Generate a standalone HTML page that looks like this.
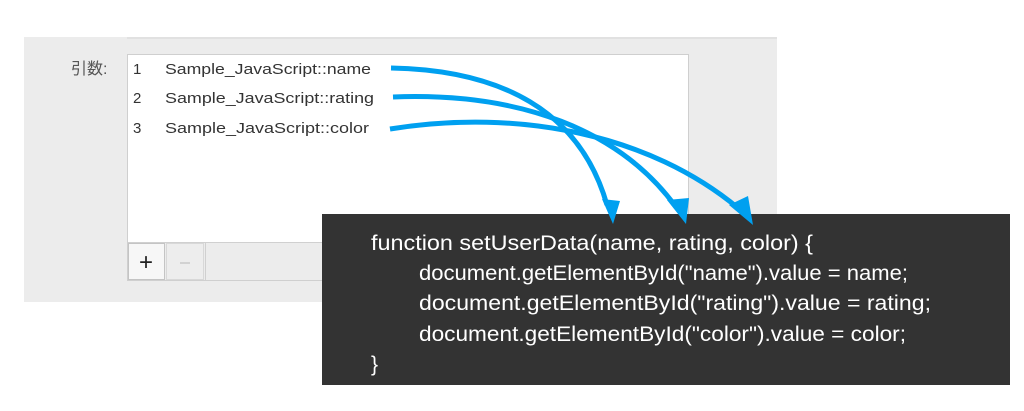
<!DOCTYPE html>
<html><head><meta charset="utf-8"><style>
html,body{margin:0;padding:0;background:#fff;width:1024px;height:411px;overflow:hidden}
</style></head><body>
<svg width="1024" height="411" viewBox="0 0 1024 411" xmlns="http://www.w3.org/2000/svg">
<rect x="0" y="0" width="1024" height="411" fill="#fff"/>
<rect x="24" y="37" width="753" height="265" fill="#ececec"/>
<line x1="127" y1="38" x2="777" y2="38" fill="none" stroke="#d6d6d6" stroke-width="1"/>
<rect x="127.5" y="54.5" width="561" height="226" fill="#fff" stroke="#cfcfcf"/>
<rect x="128" y="242" width="560" height="38" fill="#ececec"/>
<line x1="128" y1="242.5" x2="688" y2="242.5" stroke="#d0d0d0"/>
<rect x="128.5" y="243.5" width="36" height="36" fill="#f7f7f7" stroke="#c4c4c4"/>
<rect x="166.5" y="243.5" width="37" height="36" fill="#ededed" stroke="#d8d8d8"/>
<line x1="205.5" y1="243" x2="205.5" y2="280" stroke="#d0d0d0"/>
<text x="146" y="270" font-family="Liberation Sans, sans-serif" font-size="24" fill="#222" text-anchor="middle">+</text>
<line x1="180" y1="263" x2="190" y2="263" stroke="#c8c8c8" stroke-width="1.5"/>
<g font-family="Liberation Sans, 'Noto Sans CJK JP', sans-serif" font-size="15" fill="#333">
<text x="71" y="74" fill="#555" font-size="16">引数:</text>
<text x="133" y="74">1</text><text x="165" y="74" textLength="206" lengthAdjust="spacingAndGlyphs">Sample_JavaScript::name</text>
<text x="133" y="103">2</text><text x="165" y="103" textLength="209" lengthAdjust="spacingAndGlyphs">Sample_JavaScript::rating</text>
<text x="133" y="133">3</text><text x="165" y="133" textLength="204" lengthAdjust="spacingAndGlyphs">Sample_JavaScript::color</text>
</g>
<rect x="322" y="214" width="688" height="171" fill="#333"/>
<g font-family="Liberation Sans, sans-serif" font-size="21" fill="#fff">
<text x="371" y="250" textLength="442" lengthAdjust="spacingAndGlyphs">function setUserData(name, rating, color) {</text>
<text x="419" y="280" textLength="489" lengthAdjust="spacingAndGlyphs">document.getElementById("name").value = name;</text>
<text x="419" y="310" textLength="512" lengthAdjust="spacingAndGlyphs">document.getElementById("rating").value = rating;</text>
<text x="419" y="341" textLength="487" lengthAdjust="spacingAndGlyphs">document.getElementById("color").value = color;</text>
<text x="371" y="371">}</text>
</g>
<g fill="none" stroke="#00a0f0" stroke-width="5" stroke-linecap="butt">
<path d="M391 68 C500 70 580 110 607 205"/>
<path d="M393 97 C520 92 620 130 676 207"/>
<path d="M390 129 C520 108 650 135 738 208"/>
</g>
<g fill="#00a0f0">
<polygon points="602,199 620,201 613,224"/>
<polygon points="667,200 689,198 686,224"/>
<polygon points="729,205 748,196 753,225"/>
</g>
</svg>
</body></html>
